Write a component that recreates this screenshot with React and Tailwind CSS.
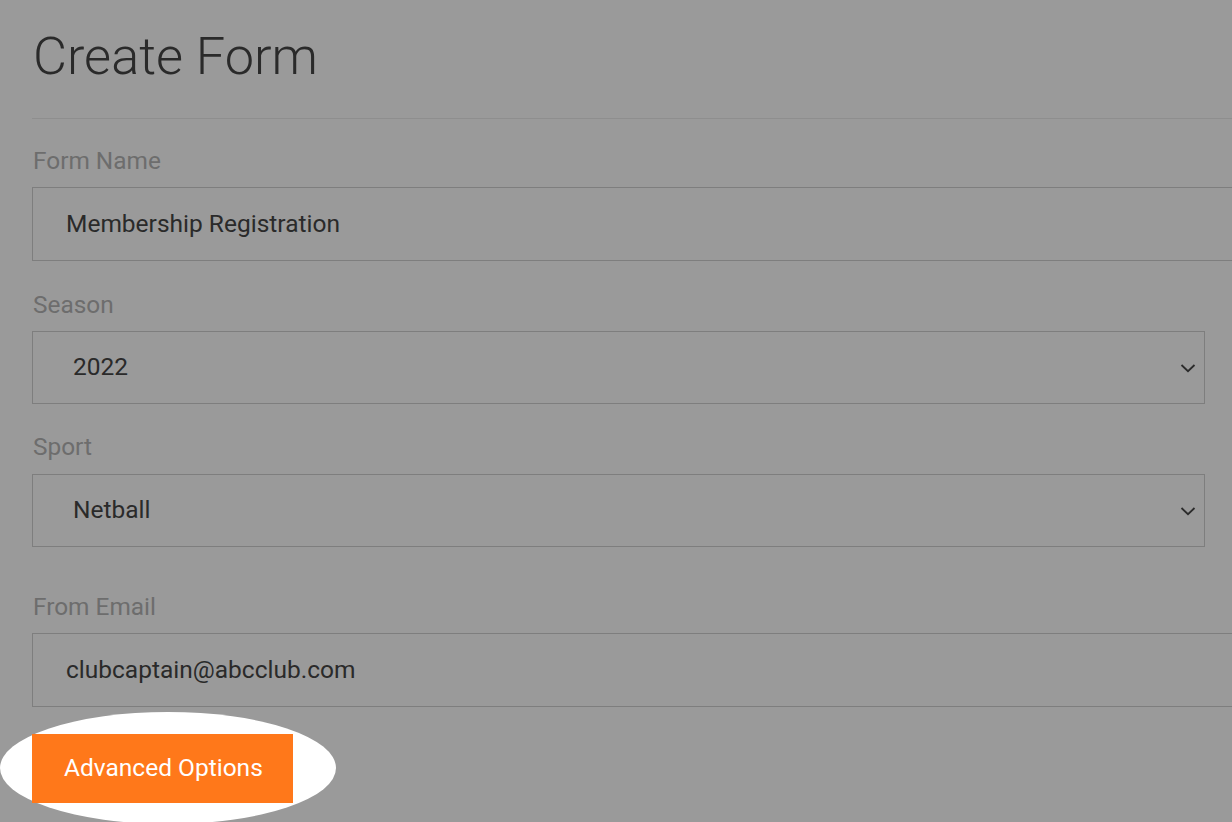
import React from 'react';

const Label = ({ children, className = '' }) => (
  <div className={`text-[24.4px] leading-[30px] text-[#6d6d6d] ${className}`}>{children}</div>
);

const Chevron = () => (
  <svg width="16" height="10" viewBox="0 0 16 10" fill="none" className="absolute right-[8px] top-1/2 -translate-y-1/2">
    <path d="M1.5 2 L8 8.2 L14.5 2" stroke="#2b2b2b" strokeWidth="1.8" />
  </svg>
);

const TextBox = ({ value }) => (
  <div className="w-[1240px] h-[74px] border border-[#7e7e7e] flex items-center pl-[33px] text-[24.5px] text-[#2a2a2a]">
    {value}
  </div>
);

const SelectBox = ({ value }) => (
  <div className="relative w-[1173px] h-[73px] border border-[#7e7e7e] flex items-center pl-[40px] text-[24.5px] text-[#2a2a2a]">
    {value}
    <Chevron />
  </div>
);

export default function App() {
  return (
    <div className="relative w-[1232px] h-[822px] overflow-hidden bg-[#9a9a9a] font-['Roboto',sans-serif]">
      <div className="pl-[32px] pt-[18px]">
        <h1 className="text-[52.3px] leading-[76px] font-light text-[#2a2a2a] pl-[1px]">Create Form</h1>
        <div className="mt-[24px] h-px bg-[#8e8e8e] w-[1240px]" />

        <Label className="mt-[27px] pl-[1px]">Form Name</Label>
        <div className="mt-[11px]">
          <TextBox value="Membership Registration" />
        </div>

        <Label className="mt-[29px] pl-[1px]">Season</Label>
        <div className="mt-[11px]">
          <SelectBox value="2022" />
        </div>

        <Label className="mt-[28px] pl-[1px]">Sport</Label>
        <div className="mt-[12px]">
          <SelectBox value="Netball" />
        </div>

        <Label className="mt-[45px] pl-[1px]">From Email</Label>
        <div className="mt-[11px]">
          <TextBox value="clubcaptain@abcclub.com" />
        </div>
      </div>

      {/* highlight annotation */}
      <div className="absolute left-0 top-[712px] w-[336px] h-[112px] rounded-[50%] bg-white" />

      <div className="relative pl-[32px] mt-[27px]">
        <button className="w-[261px] h-[69px] bg-[#ff781a] text-white text-[24.5px] flex items-center pl-[32px]">
          Advanced Options
        </button>
      </div>
    </div>
  );
}
